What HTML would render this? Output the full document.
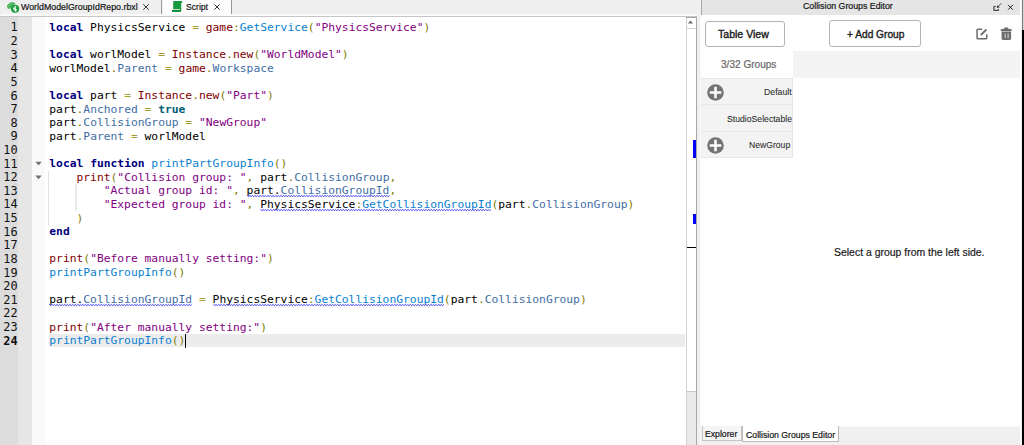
<!DOCTYPE html>
<html lang="en">
<head>
<meta charset="utf-8">
<title>Script - Roblox Studio</title>
<style>
html,body{margin:0;padding:0;}
body{width:1024px;height:445px;overflow:hidden;background:#fff;position:relative;font-family:"Liberation Sans",sans-serif;color:#111;}
.abs{position:absolute;}
.tx{-webkit-text-stroke:0.2px currentColor;position:absolute;white-space:pre;transform-origin:0 50%;font-family:"Liberation Sans",sans-serif;}
/* top tab bar */
#tabbar{left:0;top:0;width:697px;height:17px;background-color:#eeeeee;background-image:radial-gradient(circle,#e6e6e6 0.5px,transparent 0.7px);background-size:2px 2px;}
#tabwhite{left:0;top:14px;width:697px;height:2px;background:#fafafa;}
#tabline{left:0;top:16px;width:697px;height:1px;background:#c6c6c6;}
#tab1{left:0;top:0;width:161px;height:14px;background:#efefef;border-right:1px solid #a0a0a0;}
#tab2{left:163px;top:0;width:68px;height:14px;background:#fdfdfd;border-right:1px solid #969696;}
/* editor */
#editor{left:0;top:17px;width:686px;height:428px;background:#fff;overflow:hidden;}
#g1{left:0;top:0;width:18px;height:428px;background:#dcdcdc;}
#g2{left:18px;top:0;width:14px;height:428px;background:#e6e6e6;}
#g3{left:32px;top:0;width:13px;height:428px;background:#fafafa;}
.ln,.cl{position:absolute;font-family:"DejaVu Sans Mono","Liberation Mono",monospace;font-size:11.315px;line-height:13.62px;height:13.62px;white-space:pre;}
.ln{left:0;width:17.7px;text-align:right;color:#111;font-size:11.9px;margin-top:0.5px;}
.ln.cur{font-weight:bold;}
.cl{left:49.3px;color:#000;}
.k{color:#00007f;font-weight:bold;}
.t{color:#006078;font-weight:bold;}
.i{color:#000;}
.o{color:#7f7a00;}
.e{color:#a39d2e;}
.b{color:#7f0000;}
.m{color:#0a7fd0;}
.s{color:#7f007f;}
.p{color:#3f6ea5;}
.sq{position:absolute;overflow:visible;}
#curline{left:49px;top:317px;width:635.5px;height:13.2px;background:#ececec;}
#caret{left:185px;top:316.5px;width:1.2px;height:14px;background:#000;}
.fold{position:absolute;width:0;height:0;border-left:3.2px solid transparent;border-right:3.2px solid transparent;border-top:3.8px solid #787878;left:35.6px;}
.guide{position:absolute;width:2px;background:#ebebeb;}
/* scrollbar */
#sb{left:686px;top:17px;width:10px;height:428px;background:#fff;border-left:1px solid #d2d2d2;box-sizing:border-box;}
#sbr{left:696px;top:17px;width:1px;height:428px;background:#a8a8a8;}
/* right panel */
#panel{left:701px;top:0;width:319px;height:445px;background:#fff;}
#ptitle{left:0;top:0;width:319px;height:15px;background-color:#e5e5e5;background-image:radial-gradient(circle,#dbdbdb 0.5px,transparent 0.7px);background-size:2px 2px;}
.btn{position:absolute;box-sizing:border-box;border:1px solid #b4b4b4;border-radius:3px;background:#fff;}
#hdr{left:91.5px;top:50.5px;width:227.5px;height:27.5px;background:#f4f4f4;}
.row{position:absolute;left:0;width:91.5px;background:#f3f3f3;box-sizing:border-box;border-top:1px solid #e8e8e8;}
.plus{position:absolute;left:5.8px;width:17px;height:17px;}
#btabs{left:0;top:427px;width:319px;height:18px;background:#f0f0f0;border-top:0;}
.bt{position:absolute;box-sizing:border-box;}
#edge1{left:1022px;top:0;width:2px;height:30px;background:#7c7c7c;border-right:1px solid #d4d4d4;box-sizing:border-box;}
#edge2{left:1022px;top:30px;width:2px;height:415px;background:#000;}
#edge3{left:1021px;top:0;width:1px;height:445px;background:#f4f4f4;}
</style>
</head>
<body>
<!-- tab bar -->
<div id="tabbar" class="abs">
  <div id="tabwhite" class="abs"></div>
  <div id="tabline" class="abs"></div>
  <div id="tab1" class="abs">
    <svg class="abs" style="left:0;top:0" width="22" height="15" viewBox="0 0 22 15"><path d="M6.8 5.6 L10.2 2.4 L13 1.9 L15.4 3.6 L13 6 L10 8.9 L7.6 8.6 Z" fill="#4fb964"/><circle cx="15.1" cy="8.8" r="4.1" fill="#1a9e3a"/><path d="M13.6 7.4 L15.4 6 L16.6 6.3 L15.2 8 L16.9 9.4 L16.3 11.6 L14.9 11.9 L14.4 10 L13 8.9 Z" fill="#f2faf3"/></svg>
    <svg class="abs" style="left:143px;top:4.4px" width="6" height="6" viewBox="0 0 6 6"><path d="M0.3 0.3 L5.7 5.7 M5.7 0.3 L0.3 5.7" stroke="#222" stroke-width="0.9"/></svg>
  </div>
  <div id="tab2" class="abs">
    <svg class="abs" style="left:8px;top:0" width="13" height="13" viewBox="171 0 13 13"><path d="M173.9 1.1 H181.6 L182.7 2.1 L181.2 3.3 V9 H173.2 V1.8 Q173.2 1.1 173.9 1.1 Z" fill="#179a3d"/><rect x="171.9" y="9.7" width="9.2" height="2.2" rx="0.9" fill="#12923a"/><rect x="180" y="8" width="1.2" height="3" fill="#12923a"/></svg>
    <svg class="abs" style="left:50.5px;top:4.2px" width="6" height="6" viewBox="0 0 6 6"><path d="M0.3 0.3 L5.7 5.7 M5.7 0.3 L0.3 5.7" stroke="#222" stroke-width="0.9"/></svg>
  </div>
</div>
<!-- editor -->
<div id="editor" class="abs">
  <div id="g1" class="abs"></div><div id="g2" class="abs"></div><div id="g3" class="abs"></div>
  <div id="curline" class="abs"></div>
  <div class="guide" style="left:48px;top:153.5px;height:54px;width:1px;background:#e2e2e2"></div>
  <div class="guide" style="left:75px;top:167.3px;height:26.5px"></div>
  <svg class="abs" style="left:34px;top:143px" width="10" height="22" viewBox="34 160 10 22"><path d="M35.3 161.8 H41.8 L38.55 165.6 Z M35.3 175.4 H41.8 L38.55 179.2 Z" fill="#727272"/></svg>
  <div id="code" class="abs" style="left:0;top:-17px;width:686px;height:445px">
<div class="ln" style="top:20.90px">1</div>
<div class="ln" style="top:34.52px">2</div>
<div class="ln" style="top:48.14px">3</div>
<div class="ln" style="top:61.76px">4</div>
<div class="ln" style="top:75.38px">5</div>
<div class="ln" style="top:89.00px">6</div>
<div class="ln" style="top:102.62px">7</div>
<div class="ln" style="top:116.24px">8</div>
<div class="ln" style="top:129.86px">9</div>
<div class="ln" style="top:143.48px">10</div>
<div class="ln" style="top:157.10px">11</div>
<div class="ln" style="top:170.72px">12</div>
<div class="ln" style="top:184.34px">13</div>
<div class="ln" style="top:197.96px">14</div>
<div class="ln" style="top:211.58px">15</div>
<div class="ln" style="top:225.20px">16</div>
<div class="ln" style="top:238.82px">17</div>
<div class="ln" style="top:252.44px">18</div>
<div class="ln" style="top:266.06px">19</div>
<div class="ln" style="top:279.68px">20</div>
<div class="ln" style="top:293.30px">21</div>
<div class="ln" style="top:306.92px">22</div>
<div class="ln" style="top:320.54px">23</div>
<div class="ln cur" style="top:334.16px">24</div>
<div class="cl" style="top:20.90px"><span class="k">local</span><span class="i"> PhysicsService </span><span class="e">=</span><span class="i"> </span><span class="b">game</span><span class="o">:</span><span class="m">GetService</span><span class="o">(</span><span class="s">"PhysicsService"</span><span class="o">)</span></div>
<div class="cl" style="top:34.52px"></div>
<div class="cl" style="top:48.14px"><span class="k">local</span><span class="i"> worlModel </span><span class="e">=</span><span class="i"> </span><span class="b">Instance</span><span class="o">.</span><span class="b">new</span><span class="o">(</span><span class="s">"WorldModel"</span><span class="o">)</span></div>
<div class="cl" style="top:61.76px"><span class="i">worlModel</span><span class="o">.</span><span class="p">Parent</span><span class="i"> </span><span class="e">=</span><span class="i"> </span><span class="b">game</span><span class="o">.</span><span class="p">Workspace</span></div>
<div class="cl" style="top:75.38px"></div>
<div class="cl" style="top:89.00px"><span class="k">local</span><span class="i"> part </span><span class="e">=</span><span class="i"> </span><span class="b">Instance</span><span class="o">.</span><span class="b">new</span><span class="o">(</span><span class="s">"Part"</span><span class="o">)</span></div>
<div class="cl" style="top:102.62px"><span class="i">part</span><span class="o">.</span><span class="p">Anchored</span><span class="i"> </span><span class="e">=</span><span class="i"> </span><span class="t">true</span></div>
<div class="cl" style="top:116.24px"><span class="i">part</span><span class="o">.</span><span class="p">CollisionGroup</span><span class="i"> </span><span class="e">=</span><span class="i"> </span><span class="s">"NewGroup"</span></div>
<div class="cl" style="top:129.86px"><span class="i">part</span><span class="o">.</span><span class="p">Parent</span><span class="i"> </span><span class="e">=</span><span class="i"> worlModel</span></div>
<div class="cl" style="top:143.48px"></div>
<div class="cl" style="top:157.10px"><span class="k">local</span><span class="i"> </span><span class="k">function</span><span class="i"> </span><span class="m">printPartGroupInfo</span><span class="o">()</span></div>
<div class="cl" style="top:170.72px"><span class="i">    </span><span class="b">print</span><span class="o">(</span><span class="s">"Collision group: "</span><span class="o">,</span><span class="i"> part</span><span class="o">.</span><span class="p">CollisionGroup</span><span class="o">,</span></div>
<div class="cl" style="top:184.34px"><span class="i">        </span><span class="s">"Actual group id: "</span><span class="o">,</span><span class="i"> </span><span class="w"><span class="i">part.</span><span class="p">CollisionGroupId</span></span><span class="o">,</span></div>
<div class="cl" style="top:197.96px"><span class="i">        </span><span class="s">"Expected group id: "</span><span class="o">,</span><span class="i"> </span><span class="w"><span class="i">PhysicsService</span><span class="o">:</span><span class="m">GetCollisionGroupId</span></span><span class="o">(</span><span class="i">part</span><span class="o">.</span><span class="p">CollisionGroup</span><span class="o">)</span></div>
<div class="cl" style="top:211.58px"><span class="i">    </span><span class="o">)</span></div>
<div class="cl" style="top:225.20px"><span class="k">end</span></div>
<div class="cl" style="top:238.82px"></div>
<div class="cl" style="top:252.44px"><span class="b">print</span><span class="o">(</span><span class="s">"Before manually setting:"</span><span class="o">)</span></div>
<div class="cl" style="top:266.06px"><span class="m">printPartGroupInfo</span><span class="o">()</span></div>
<div class="cl" style="top:279.68px"></div>
<div class="cl" style="top:293.30px"><span class="w"><span class="i">part.</span><span class="p">CollisionGroupId</span></span><span class="i"> </span><span class="e">=</span><span class="i"> </span><span class="w"><span class="i">PhysicsService</span><span class="o">:</span><span class="m">GetCollisionGroupId</span></span><span class="o">(</span><span class="i">part</span><span class="o">.</span><span class="p">CollisionGroup</span><span class="o">)</span></div>
<div class="cl" style="top:306.92px"></div>
<div class="cl" style="top:320.54px"><span class="b">print</span><span class="o">(</span><span class="s">"After manually setting:"</span><span class="o">)</span></div>
<div class="cl" style="top:334.16px"><span class="m">printPartGroupInfo</span><span class="o">()</span></div>
<svg class="sq" style="left:246.85px;top:195.07px" width="143.1" height="2.4" viewBox="0 0 143.1 2.4"><path d="M0.00 0.5 L1.30 1.6 L2.60 0.5 L3.90 1.6 L5.20 0.5 L6.50 1.6 L7.80 0.5 L9.10 1.6 L10.40 0.5 L11.70 1.6 L13.00 0.5 L14.30 1.6 L15.60 0.5 L16.90 1.6 L18.20 0.5 L19.50 1.6 L20.80 0.5 L22.10 1.6 L23.40 0.5 L24.70 1.6 L26.00 0.5 L27.30 1.6 L28.60 0.5 L29.90 1.6 L31.20 0.5 L32.50 1.6 L33.80 0.5 L35.10 1.6 L36.40 0.5 L37.70 1.6 L39.00 0.5 L40.30 1.6 L41.60 0.5 L42.90 1.6 L44.20 0.5 L45.50 1.6 L46.80 0.5 L48.10 1.6 L49.40 0.5 L50.70 1.6 L52.00 0.5 L53.30 1.6 L54.60 0.5 L55.90 1.6 L57.20 0.5 L58.50 1.6 L59.80 0.5 L61.10 1.6 L62.40 0.5 L63.70 1.6 L65.00 0.5 L66.30 1.6 L67.60 0.5 L68.90 1.6 L70.20 0.5 L71.50 1.6 L72.80 0.5 L74.10 1.6 L75.40 0.5 L76.70 1.6 L78.00 0.5 L79.30 1.6 L80.60 0.5 L81.90 1.6 L83.20 0.5 L84.50 1.6 L85.80 0.5 L87.10 1.6 L88.40 0.5 L89.70 1.6 L91.00 0.5 L92.30 1.6 L93.60 0.5 L94.90 1.6 L96.20 0.5 L97.50 1.6 L98.80 0.5 L100.10 1.6 L101.40 0.5 L102.70 1.6 L104.00 0.5 L105.30 1.6 L106.60 0.5 L107.90 1.6 L109.20 0.5 L110.50 1.6 L111.80 0.5 L113.10 1.6 L114.40 0.5 L115.70 1.6 L117.00 0.5 L118.30 1.6 L119.60 0.5 L120.90 1.6 L122.20 0.5 L123.50 1.6 L124.80 0.5 L126.10 1.6 L127.40 0.5 L128.70 1.6 L130.00 0.5 L131.30 1.6 L132.60 0.5 L133.90 1.6 L135.20 0.5 L136.50 1.6 L137.80 0.5 L139.10 1.6 L140.40 0.5 L141.70 1.6 L143.00 0.5" fill="none" stroke="#3232f0" stroke-width="0.95"/></svg>
<svg class="sq" style="left:260.47px;top:208.69px" width="231.6" height="2.4" viewBox="0 0 231.6 2.4"><path d="M0.00 0.5 L1.30 1.6 L2.60 0.5 L3.90 1.6 L5.20 0.5 L6.50 1.6 L7.80 0.5 L9.10 1.6 L10.40 0.5 L11.70 1.6 L13.00 0.5 L14.30 1.6 L15.60 0.5 L16.90 1.6 L18.20 0.5 L19.50 1.6 L20.80 0.5 L22.10 1.6 L23.40 0.5 L24.70 1.6 L26.00 0.5 L27.30 1.6 L28.60 0.5 L29.90 1.6 L31.20 0.5 L32.50 1.6 L33.80 0.5 L35.10 1.6 L36.40 0.5 L37.70 1.6 L39.00 0.5 L40.30 1.6 L41.60 0.5 L42.90 1.6 L44.20 0.5 L45.50 1.6 L46.80 0.5 L48.10 1.6 L49.40 0.5 L50.70 1.6 L52.00 0.5 L53.30 1.6 L54.60 0.5 L55.90 1.6 L57.20 0.5 L58.50 1.6 L59.80 0.5 L61.10 1.6 L62.40 0.5 L63.70 1.6 L65.00 0.5 L66.30 1.6 L67.60 0.5 L68.90 1.6 L70.20 0.5 L71.50 1.6 L72.80 0.5 L74.10 1.6 L75.40 0.5 L76.70 1.6 L78.00 0.5 L79.30 1.6 L80.60 0.5 L81.90 1.6 L83.20 0.5 L84.50 1.6 L85.80 0.5 L87.10 1.6 L88.40 0.5 L89.70 1.6 L91.00 0.5 L92.30 1.6 L93.60 0.5 L94.90 1.6 L96.20 0.5 L97.50 1.6 L98.80 0.5 L100.10 1.6 L101.40 0.5 L102.70 1.6 L104.00 0.5 L105.30 1.6 L106.60 0.5 L107.90 1.6 L109.20 0.5 L110.50 1.6 L111.80 0.5 L113.10 1.6 L114.40 0.5 L115.70 1.6 L117.00 0.5 L118.30 1.6 L119.60 0.5 L120.90 1.6 L122.20 0.5 L123.50 1.6 L124.80 0.5 L126.10 1.6 L127.40 0.5 L128.70 1.6 L130.00 0.5 L131.30 1.6 L132.60 0.5 L133.90 1.6 L135.20 0.5 L136.50 1.6 L137.80 0.5 L139.10 1.6 L140.40 0.5 L141.70 1.6 L143.00 0.5 L144.30 1.6 L145.60 0.5 L146.90 1.6 L148.20 0.5 L149.50 1.6 L150.80 0.5 L152.10 1.6 L153.40 0.5 L154.70 1.6 L156.00 0.5 L157.30 1.6 L158.60 0.5 L159.90 1.6 L161.20 0.5 L162.50 1.6 L163.80 0.5 L165.10 1.6 L166.40 0.5 L167.70 1.6 L169.00 0.5 L170.30 1.6 L171.60 0.5 L172.90 1.6 L174.20 0.5 L175.50 1.6 L176.80 0.5 L178.10 1.6 L179.40 0.5 L180.70 1.6 L182.00 0.5 L183.30 1.6 L184.60 0.5 L185.90 1.6 L187.20 0.5 L188.50 1.6 L189.80 0.5 L191.10 1.6 L192.40 0.5 L193.70 1.6 L195.00 0.5 L196.30 1.6 L197.60 0.5 L198.90 1.6 L200.20 0.5 L201.50 1.6 L202.80 0.5 L204.10 1.6 L205.40 0.5 L206.70 1.6 L208.00 0.5 L209.30 1.6 L210.60 0.5 L211.90 1.6 L213.20 0.5 L214.50 1.6 L215.80 0.5 L217.10 1.6 L218.40 0.5 L219.70 1.6 L221.00 0.5 L222.30 1.6 L223.60 0.5 L224.90 1.6 L226.20 0.5 L227.50 1.6 L228.80 0.5 L230.10 1.6 L231.40 0.5" fill="none" stroke="#3232f0" stroke-width="0.95"/></svg>
<svg class="sq" style="left:49.30px;top:304.03px" width="143.1" height="2.4" viewBox="0 0 143.1 2.4"><path d="M0.00 0.5 L1.30 1.6 L2.60 0.5 L3.90 1.6 L5.20 0.5 L6.50 1.6 L7.80 0.5 L9.10 1.6 L10.40 0.5 L11.70 1.6 L13.00 0.5 L14.30 1.6 L15.60 0.5 L16.90 1.6 L18.20 0.5 L19.50 1.6 L20.80 0.5 L22.10 1.6 L23.40 0.5 L24.70 1.6 L26.00 0.5 L27.30 1.6 L28.60 0.5 L29.90 1.6 L31.20 0.5 L32.50 1.6 L33.80 0.5 L35.10 1.6 L36.40 0.5 L37.70 1.6 L39.00 0.5 L40.30 1.6 L41.60 0.5 L42.90 1.6 L44.20 0.5 L45.50 1.6 L46.80 0.5 L48.10 1.6 L49.40 0.5 L50.70 1.6 L52.00 0.5 L53.30 1.6 L54.60 0.5 L55.90 1.6 L57.20 0.5 L58.50 1.6 L59.80 0.5 L61.10 1.6 L62.40 0.5 L63.70 1.6 L65.00 0.5 L66.30 1.6 L67.60 0.5 L68.90 1.6 L70.20 0.5 L71.50 1.6 L72.80 0.5 L74.10 1.6 L75.40 0.5 L76.70 1.6 L78.00 0.5 L79.30 1.6 L80.60 0.5 L81.90 1.6 L83.20 0.5 L84.50 1.6 L85.80 0.5 L87.10 1.6 L88.40 0.5 L89.70 1.6 L91.00 0.5 L92.30 1.6 L93.60 0.5 L94.90 1.6 L96.20 0.5 L97.50 1.6 L98.80 0.5 L100.10 1.6 L101.40 0.5 L102.70 1.6 L104.00 0.5 L105.30 1.6 L106.60 0.5 L107.90 1.6 L109.20 0.5 L110.50 1.6 L111.80 0.5 L113.10 1.6 L114.40 0.5 L115.70 1.6 L117.00 0.5 L118.30 1.6 L119.60 0.5 L120.90 1.6 L122.20 0.5 L123.50 1.6 L124.80 0.5 L126.10 1.6 L127.40 0.5 L128.70 1.6 L130.00 0.5 L131.30 1.6 L132.60 0.5 L133.90 1.6 L135.20 0.5 L136.50 1.6 L137.80 0.5 L139.10 1.6 L140.40 0.5 L141.70 1.6 L143.00 0.5" fill="none" stroke="#3232f0" stroke-width="0.95"/></svg>
<svg class="sq" style="left:212.79px;top:304.03px" width="231.6" height="2.4" viewBox="0 0 231.6 2.4"><path d="M0.00 0.5 L1.30 1.6 L2.60 0.5 L3.90 1.6 L5.20 0.5 L6.50 1.6 L7.80 0.5 L9.10 1.6 L10.40 0.5 L11.70 1.6 L13.00 0.5 L14.30 1.6 L15.60 0.5 L16.90 1.6 L18.20 0.5 L19.50 1.6 L20.80 0.5 L22.10 1.6 L23.40 0.5 L24.70 1.6 L26.00 0.5 L27.30 1.6 L28.60 0.5 L29.90 1.6 L31.20 0.5 L32.50 1.6 L33.80 0.5 L35.10 1.6 L36.40 0.5 L37.70 1.6 L39.00 0.5 L40.30 1.6 L41.60 0.5 L42.90 1.6 L44.20 0.5 L45.50 1.6 L46.80 0.5 L48.10 1.6 L49.40 0.5 L50.70 1.6 L52.00 0.5 L53.30 1.6 L54.60 0.5 L55.90 1.6 L57.20 0.5 L58.50 1.6 L59.80 0.5 L61.10 1.6 L62.40 0.5 L63.70 1.6 L65.00 0.5 L66.30 1.6 L67.60 0.5 L68.90 1.6 L70.20 0.5 L71.50 1.6 L72.80 0.5 L74.10 1.6 L75.40 0.5 L76.70 1.6 L78.00 0.5 L79.30 1.6 L80.60 0.5 L81.90 1.6 L83.20 0.5 L84.50 1.6 L85.80 0.5 L87.10 1.6 L88.40 0.5 L89.70 1.6 L91.00 0.5 L92.30 1.6 L93.60 0.5 L94.90 1.6 L96.20 0.5 L97.50 1.6 L98.80 0.5 L100.10 1.6 L101.40 0.5 L102.70 1.6 L104.00 0.5 L105.30 1.6 L106.60 0.5 L107.90 1.6 L109.20 0.5 L110.50 1.6 L111.80 0.5 L113.10 1.6 L114.40 0.5 L115.70 1.6 L117.00 0.5 L118.30 1.6 L119.60 0.5 L120.90 1.6 L122.20 0.5 L123.50 1.6 L124.80 0.5 L126.10 1.6 L127.40 0.5 L128.70 1.6 L130.00 0.5 L131.30 1.6 L132.60 0.5 L133.90 1.6 L135.20 0.5 L136.50 1.6 L137.80 0.5 L139.10 1.6 L140.40 0.5 L141.70 1.6 L143.00 0.5 L144.30 1.6 L145.60 0.5 L146.90 1.6 L148.20 0.5 L149.50 1.6 L150.80 0.5 L152.10 1.6 L153.40 0.5 L154.70 1.6 L156.00 0.5 L157.30 1.6 L158.60 0.5 L159.90 1.6 L161.20 0.5 L162.50 1.6 L163.80 0.5 L165.10 1.6 L166.40 0.5 L167.70 1.6 L169.00 0.5 L170.30 1.6 L171.60 0.5 L172.90 1.6 L174.20 0.5 L175.50 1.6 L176.80 0.5 L178.10 1.6 L179.40 0.5 L180.70 1.6 L182.00 0.5 L183.30 1.6 L184.60 0.5 L185.90 1.6 L187.20 0.5 L188.50 1.6 L189.80 0.5 L191.10 1.6 L192.40 0.5 L193.70 1.6 L195.00 0.5 L196.30 1.6 L197.60 0.5 L198.90 1.6 L200.20 0.5 L201.50 1.6 L202.80 0.5 L204.10 1.6 L205.40 0.5 L206.70 1.6 L208.00 0.5 L209.30 1.6 L210.60 0.5 L211.90 1.6 L213.20 0.5 L214.50 1.6 L215.80 0.5 L217.10 1.6 L218.40 0.5 L219.70 1.6 L221.00 0.5 L222.30 1.6 L223.60 0.5 L224.90 1.6 L226.20 0.5 L227.50 1.6 L228.80 0.5 L230.10 1.6 L231.40 0.5" fill="none" stroke="#3232f0" stroke-width="0.95"/></svg>
  </div>
  <div id="caret" class="abs"></div>
</div>
<div id="sb" class="abs">
  <div class="abs" style="left:0;top:0;width:9px;height:11px;border-bottom:1px solid #d2d2d2"></div>
  <svg class="abs" style="left:0;top:0" width="10" height="11" viewBox="0 0 10 11"><path d="M0.9 6.6 H6.1 L3.5 3.5 Z" fill="#6a6a6a"/></svg>
  <div class="abs" style="left:6px;top:123px;width:3px;height:18px;background:#0000ff"></div>
  <div class="abs" style="left:6px;top:197px;width:3px;height:10px;background:#0000ff"></div>
  <div class="abs" style="left:0;top:229.5px;width:9px;height:1px;background:#000"></div>
  <div class="abs" style="left:0;top:374px;width:9px;height:54px;background:#e9e9e9;border-top:1px solid #c8c8c8"></div>
</div>
<div id="sbr" class="abs"></div>
<div class="abs" style="left:686px;top:17px;width:11px;height:1px;background:#a6a6a6"></div>
<div class="abs" style="left:697px;top:0;width:4px;height:445px;background:#f0f0f0"></div>
<div class="abs" style="left:700px;top:15px;width:1px;height:430px;background:#f8f8f8"></div>
<!-- right panel -->
<div id="panel" class="abs">
  <div id="ptitle" class="abs"></div>
  <div class="abs" style="left:0;top:0;width:1px;height:15px;background:#a8a8a8"></div>
  <svg class="abs" style="left:291px;top:2px" width="12" height="10" viewBox="992 2 12 10"><path d="M995.7 6.4 H993.9 V10.4 H998.4 V9" fill="none" stroke="#2a2a2a" stroke-width="1"/><path d="M1001.3 3.2 L998.4 6.4" fill="none" stroke="#2a2a2a" stroke-width="0.75"/><path d="M996.8 8 L997.6 5.2 L999.6 7.2 Z" fill="#222"/></svg>
  <svg class="abs" style="left:306px;top:4px" width="7" height="7" viewBox="1007 4 7 7"><path d="M1008.1 4.9 L1012.9 9.7 M1012.9 4.9 L1008.1 9.7" stroke="#1c1c1c" stroke-width="1"/></svg>
  <div class="btn" style="left:3.7px;top:21px;width:80px;height:25.5px;"></div>
  <div class="btn" style="left:128px;top:20px;width:92px;height:26.5px;"></div>
  <svg class="abs" style="left:274px;top:26px" width="40" height="16" viewBox="975 26 40 16"><path d="M982.2 29.25 H977.9 Q977.05 29.25 977.05 30.1 V38 Q977.05 38.85 977.9 38.85 H985.9 Q986.75 38.85 986.75 38 V34.2" stroke="#6c6c6c" stroke-width="1.5" fill="none"/><path d="M980.8 35 L986.4 29.5" stroke="#6c6c6c" stroke-width="1.8"/><rect x="1004.2" y="27.5" width="4.1" height="2" rx="0.6" fill="#6c6c6c"/><rect x="1000.7" y="29.1" width="11" height="1.9" rx="0.7" fill="#6c6c6c"/><path d="M1001.6 31.6 H1011.1 V38.6 Q1011.1 40 1009.7 40 H1003 Q1001.6 40 1001.6 38.6 Z" fill="#6c6c6c"/><path d="M1005.2 33.5 V38.2 M1008.1 33.5 V38.2" stroke="#e6e6e6" stroke-width="0.9"/></svg>
  <div id="hdr" class="abs"></div>
  <div class="row" style="top:77.5px;height:26.6px"><svg class="plus" style="top:5.4px" viewBox="0 0 17 17"><circle cx="8.5" cy="8.5" r="8.3" fill="#747474"/><path d="M8.5 2.7 V14.3 M2.7 8.5 H14.3" stroke="#fff" stroke-width="2.5"/></svg></div>
  <div class="row" style="top:104.1px;height:26.8px"></div>
  <div class="row" style="top:130.9px;height:27.1px;border-bottom:1px solid #e8e8e8"><svg class="plus" style="top:5.3px" viewBox="0 0 17 17"><circle cx="8.5" cy="8.5" r="8.3" fill="#747474"/><path d="M8.5 2.7 V14.3 M2.7 8.5 H14.3" stroke="#fff" stroke-width="2.5"/></svg></div>
  <div class="abs" style="left:91px;top:77.5px;width:1px;height:80.5px;background:#e6e6e6"></div>
  <div class="abs" style="left:0;top:426px;width:319px;height:1px;background:#f8f8f8"></div>
  <div id="btabs" class="abs">
    <div class="bt" style="left:0.5px;top:-1px;width:40.5px;height:14.5px;border:1px solid #c4c4c4;border-top:none;background:#f5f5f5;"></div>
    <div class="bt" style="left:40.5px;top:-1px;width:97.5px;height:16.2px;border:1px solid #bcbcbc;border-top:none;background:#fff;"></div>
  </div>
</div>
<div id="edge1" class="abs"></div>
<div id="edge3" class="abs"></div>
<div id="edge2" class="abs"></div>
<span class="tx" style="left:20.80px;top:2.53px;font-size:8.94px;line-height:8.94px;color:#151515;transform:scaleX(0.9902)">WorldModelGroupIdRepo.rbxl</span>
<span class="tx" style="left:185.70px;top:2.73px;font-size:8.94px;line-height:8.94px;color:#151515;transform:scaleX(0.9644)">Script</span>
<span class="tx" style="left:803.10px;top:2.35px;font-size:8.80px;line-height:8.80px;color:#151515;transform:scaleX(0.9970)">Collision Groups Editor</span>
<span class="tx" style="left:718.45px;top:28.96px;font-size:11.03px;line-height:11.03px;color:#1c1c1c;-webkit-text-stroke:0.4px currentColor;transform:scaleX(0.9580)">Table View</span>
<span class="tx" style="left:846.60px;top:28.86px;font-size:11.03px;line-height:11.03px;color:#1c1c1c;-webkit-text-stroke:0.4px currentColor;transform:scaleX(0.9232)">+ Add Group</span>
<span class="tx" style="left:720.50px;top:59.42px;font-size:10.61px;line-height:10.61px;color:#686868;transform:scaleX(0.9488)">3/32 Groups</span>
<span class="tx" style="left:763.50px;top:88.03px;font-size:8.94px;line-height:8.94px;color:#303030;-webkit-text-stroke:0.08px currentColor;transform:scaleX(0.9794)">Default</span>
<span class="tx" style="left:727.40px;top:114.93px;font-size:8.94px;line-height:8.94px;color:#303030;-webkit-text-stroke:0.08px currentColor;transform:scaleX(0.9706)">StudioSelectable</span>
<span class="tx" style="left:749.30px;top:140.93px;font-size:8.94px;line-height:8.94px;color:#303030;-webkit-text-stroke:0.08px currentColor;transform:scaleX(0.9659)">NewGroup</span>
<span class="tx" style="left:834.10px;top:248.24px;font-size:10.47px;line-height:10.47px;color:#1c1c1c;transform:scaleX(0.9985)">Select a group from the left side.</span>
<span class="tx" style="left:705.40px;top:429.87px;font-size:8.66px;line-height:8.66px;color:#151515;transform:scaleX(1.0020)">Explorer</span>
<span class="tx" style="left:746.00px;top:430.67px;font-size:8.66px;line-height:8.66px;color:#151515;transform:scaleX(1.0059)">Collision Groups Editor</span>
</body>
</html>
